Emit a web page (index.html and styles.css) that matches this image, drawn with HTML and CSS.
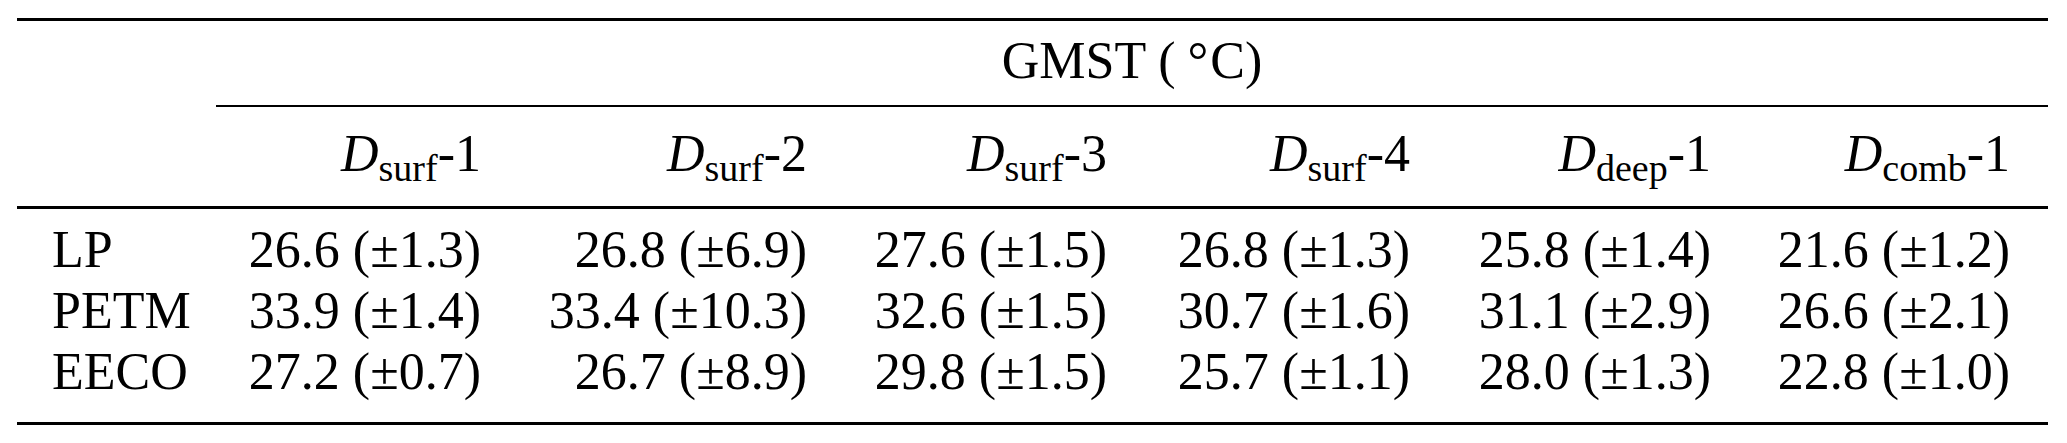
FILE: index.html
```html
<!DOCTYPE html>
<html lang="en">
<head>
<meta charset="utf-8">
<title>GMST table</title>
<link rel="stylesheet" href="styles.css">
</head>
<body>
<table class="gmst">
  <colgroup>
    <col class="c-label">
    <col class="c1">
    <col class="c2">
    <col class="c3">
    <col class="c4">
    <col class="c5">
    <col class="c6">
  </colgroup>
  <thead>
    <tr class="group-row">
      <th class="blank"></th>
      <th class="group" colspan="6">GMST (<span class="deg">°</span>C)</th>
    </tr>
    <tr class="head-row">
      <th class="blank"></th>
      <th class="num"><i>D</i><sub>surf</sub>-1</th>
      <th class="num"><i>D</i><sub>surf</sub>-2</th>
      <th class="num"><i>D</i><sub>surf</sub>-3</th>
      <th class="num"><i>D</i><sub>surf</sub>-4</th>
      <th class="num"><i>D</i><sub>deep</sub>-1</th>
      <th class="num"><i>D</i><sub>comb</sub>-1</th>
    </tr>
  </thead>
  <tbody>
    <tr class="first">
      <td class="label">LP</td>
      <td class="num">26.6 (±1.3)</td>
      <td class="num">26.8 (±6.9)</td>
      <td class="num">27.6 (±1.5)</td>
      <td class="num">26.8 (±1.3)</td>
      <td class="num">25.8 (±1.4)</td>
      <td class="num">21.6 (±1.2)</td>
    </tr>
    <tr>
      <td class="label">PETM</td>
      <td class="num">33.9 (±1.4)</td>
      <td class="num">33.4 (±10.3)</td>
      <td class="num">32.6 (±1.5)</td>
      <td class="num">30.7 (±1.6)</td>
      <td class="num">31.1 (±2.9)</td>
      <td class="num">26.6 (±2.1)</td>
    </tr>
    <tr class="last">
      <td class="label">EECO</td>
      <td class="num">27.2 (±0.7)</td>
      <td class="num">26.7 (±8.9)</td>
      <td class="num">29.8 (±1.5)</td>
      <td class="num">25.7 (±1.1)</td>
      <td class="num">28.0 (±1.3)</td>
      <td class="num">22.8 (±1.0)</td>
    </tr>
  </tbody>
</table>
</body>
</html>
```

FILE: styles.css
```css
html, body {
  margin: 0;
  background: #ffffff;
}

body {
  padding: 18px 0 0 17px;
  font-family: "Liberation Serif", "Times New Roman", serif;
  font-size: 52px;
  color: #000000;
}

.gmst {
  table-layout: fixed;
  width: 2031px;
  border-collapse: separate;
  border-spacing: 0;
  border-top: 3px solid #000;
  border-bottom: 3px solid #000;
}

.c-label { width: 199px; }
.c1 { width: 303px; }
.c2 { width: 326px; }
.c3 { width: 300px; }
.c4 { width: 303px; }
.c5 { width: 301px; }
.c6 { width: 299px; }

.gmst th,
.gmst td {
  font-weight: normal;
  line-height: 61px;
  padding: 0;
  white-space: nowrap;
  vertical-align: top;
}

.group-row th {
  padding-top: 9px;
  padding-bottom: 14px;
}

.group-row .group {
  text-align: center;
  border-bottom: 2px solid #000;
}

.group-row .blank {
  padding-bottom: 16px;
}

.deg {
  margin-left: 12px;
  margin-right: 2px;
}

.head-row th {
  padding-top: 16px;
  padding-bottom: 22px;
  border-bottom: 3px solid #000;
}

.head-row i {
  font-style: italic;
}

.head-row sub {
  font-size: 38px;
  line-height: 0;
  vertical-align: -10px;
}

.gmst .num {
  text-align: right;
  padding-right: 38px;
}

.gmst .label {
  text-align: left;
  padding-left: 35px;
}

tbody tr.first td {
  padding-top: 10px;
}

tbody tr.last td {
  padding-bottom: 20px;
}
```
